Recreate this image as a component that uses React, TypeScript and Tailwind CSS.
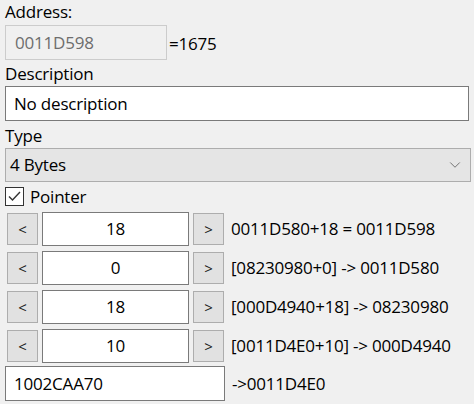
import { ChevronDown } from "lucide-react";

const rows = [
    { offset: "18", info: "0011D580+18 = 0011D598" },
    { offset: "0", info: "[08230980+0] -> 0011D580" },
    { offset: "18", info: "[000D4940+18] -> 08230980" },
    { offset: "10", info: "[0011D4E0+10] -> 000D4940" },
];

function SmallButton({ label }: { label: string }) {
    return (
        <button className="w-[31px] h-[32px] bg-[#e1e1e1] border border-[#adadad] flex items-center justify-center text-[15px] font-medium text-[#222]">
            {label}
        </button>
    );
}

export default function App() {
    return (
        <div className="w-[474px] h-[404px] bg-[#f0f0f0] overflow-hidden text-[17px] text-black font-['Segoe_UI','Open_Sans',sans-serif] tracking-[-0.2px] pl-[5px] pr-[3px]">
            <div className="h-[25px] leading-[24px]">Address:</div>
            <div className="flex items-center h-[35px]">
                <div className="w-[162px] h-[35px] border border-[#cccccc] bg-[#f0f0f0] text-[#6d6d6d] px-[9px] flex items-center">0011D598</div>
                <span className="ml-[2px] pt-[2px]">=1675</span>
            </div>
            <div className="h-[26px] leading-[28px]">Description</div>
            <div className="w-[464px] h-[35px] border border-[#7a7a7a] bg-white px-[8px] flex items-center">No description</div>
            <div className="h-[27px] leading-[30px]">Type</div>
            <div className="w-[466px] h-[34px] border border-[#adadad] bg-[#e5e5e5] px-[4px] flex items-center justify-between">
                <span>4 Bytes</span>
                <ChevronDown className="w-[18px] h-[18px] text-[#707070] mr-[2px]" strokeWidth={1.3} />
            </div>
            <div className="h-[29px] flex items-center gap-[6px]">
                <div className="w-[19px] h-[19px] border border-[#333] bg-white flex items-center justify-center">
                    <svg width="15" height="15" viewBox="0 0 15 15">
                        <path d="M2 7.5 L5.5 11 L13 3" fill="none" stroke="#333" strokeWidth="1.4" />
                    </svg>
                </div>
                <span>Pointer</span>
            </div>
            <div className="flex flex-col gap-[5px] mt-[1px]">
                {rows.map((r, i) => (
                    <div key={i} className="flex items-center h-[34px]">
                        <div className="ml-[2px]"><SmallButton label="<" /></div>
                        <div className="ml-[4px] w-[147px] h-[34px] border border-[#7a7a7a] bg-white flex items-center justify-center">{r.offset}</div>
                        <div className="ml-[4px]"><SmallButton label=">" /></div>
                        <span className="ml-[7px]">{r.info}</span>
                    </div>
                ))}
            </div>
            <div className="flex items-center mt-[3px]">
                <div className="w-[220px] h-[35px] border border-[#7a7a7a] bg-white px-[8px] flex items-center">1002CAA70</div>
                <span className="ml-[7px]">-&gt;0011D4E0</span>
            </div>
        </div>
    );
}
